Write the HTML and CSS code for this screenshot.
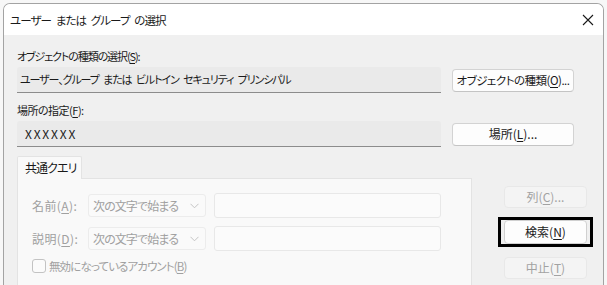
FILE: index.html
```html
<!DOCTYPE html>
<html lang="ja">
<head>
<meta charset="utf-8">
<link rel="stylesheet" href="styles.css">
</head>
<body>
<div class="window">
  <div class="titlebar">
    <span class="title">ユーザー または グループ の選択</span>
    <span class="close">
      <svg width="12" height="12" viewBox="0 0 12 12"><path d="M1 1L11 11M11 1L1 11" stroke="#1a1a1a" stroke-width="1.1" fill="none"/></svg>
    </span>
  </div>
  <div class="content">
    <div class="label l1">オブジェクトの種類の選択(<u>S</u>):</div>
    <div class="row">
      <div class="field">ユーザー、グループ または ビルトイン セキュリティ プリンシパル</div>
      <button class="btn wide">オブジェクトの種類(<u>O</u>)...</button>
    </div>
    <div class="label l2">場所の指定(<u>F</u>):</div>
    <div class="row">
      <div class="field loc">XXXXXX</div>
      <button class="btn">場所(<u>L</u>)...</button>
    </div>
    <div class="lower">
      <div class="tabs">
        <div class="tab">共通クエリ</div>
        <div class="panel">
          <div class="qrow">
            <span class="qlabel">名前(<u>A</u>):</span>
            <span class="combo">次の文字で始まる<svg class="chev" width="9" height="6" viewBox="0 0 9 6"><path d="M0.5 0.8L4.5 4.8L8.5 0.8" stroke="#c4c4c4" fill="none"/></svg></span>
            <span class="tbox"></span>
          </div>
          <div class="qrow">
            <span class="qlabel">説明(<u>D</u>):</span>
            <span class="combo">次の文字で始まる<svg class="chev" width="9" height="6" viewBox="0 0 9 6"><path d="M0.5 0.8L4.5 4.8L8.5 0.8" stroke="#c4c4c4" fill="none"/></svg></span>
            <span class="tbox"></span>
          </div>
          <div class="crow">
            <span class="check"></span>
            <span class="ctext">無効になっているアカウント(<u>B</u>)</span>
          </div>
        </div>
      </div>
      <div class="side">
        <button class="btn small disabled">列(<u>C</u>)...</button>
        <div class="focus"><button class="btn small">検索(<u>N</u>)</button></div>
        <button class="btn small disabled">中止(<u>T</u>)</button>
      </div>
    </div>
  </div>
</div>
</body>
</html>
```

FILE: styles.css
```css
* { box-sizing: border-box; }
html, body { margin: 0; padding: 0; height: 100%; }
body {
  background: #f7f7f7;
  font-family: "Noto Sans CJK JP", sans-serif;
  font-feature-settings: "palt";
  font-size: 12px;
  color: #1a1a1a;
  overflow: hidden;
  white-space: nowrap;
}
u { text-decoration: underline; text-underline-offset: 2px; }
.window {
  margin: 3px 3px 0 3px;
  height: 282px;
  border: 1px solid #a3a3a3;
  border-bottom: none;
  border-radius: 7px 7px 0 0;
  overflow: hidden;
  display: flex;
  flex-direction: column;
}
.titlebar {
  height: 31px;
  background: #ffffff;
  display: flex;
  align-items: center;
  justify-content: space-between;
  padding: 0 9px 0 6px;
  flex: none;
}
.title { font-size: 11.5px; letter-spacing: -0.9px; word-spacing: 3px; }
.close { display: flex; align-items: center; }
.content {
  flex: 1;
  background: #f0f0f0;
  padding: 13px 0 0 13px;
}
.label { line-height: 16px; }
.l1 { font-size: 11px; letter-spacing: -1.1px; }
.l2 { margin-top: 9px; font-size: 11px; letter-spacing: -0.5px; }
.row {
  display: flex;
  align-items: center;
  margin-top: 3px;
}
.field {
  width: 424px;
  height: 26px;
  background: #eaeaea;
  border-bottom: 1px solid #8c8c8c;
  border-radius: 3px 3px 0 0;
  padding: 0 3px;
  line-height: 25px;
  font-size: 11px;
  letter-spacing: -1.1px;
  word-spacing: 3px;
}
.field.loc { padding-left: 8px; letter-spacing: 1.8px; font-size: 12px; }
.btn {
  font: inherit;
  font-feature-settings: "palt";
  color: #1a1a1a;
  background: #fdfdfd;
  border: 1px solid #d3d3d3;
  border-bottom-color: #c4c4c4;
  border-radius: 4px;
  height: 23px;
  width: 122px;
  margin-left: 11px;
  padding: 0;
  line-height: 20px;
  white-space: nowrap;
}
.btn.wide { font-size: 11.5px; letter-spacing: -0.5px; }
.lower {
  display: flex;
  margin-top: 9px;
}
.tabs { width: 455px; display: flex; flex-direction: column; }
.tab {
  width: 65px;
  height: 23px;
  background: #f9f9f9;
  border: 1px solid #e3e3e3;
  border-bottom: none;
  border-radius: 2px 2px 0 0;
  padding-left: 7px;
  line-height: 22px;
  letter-spacing: -0.9px;
  position: relative;
  z-index: 1;
  margin-bottom: -1px;
}
.panel {
  background: #f9f9f9;
  border: 1px solid #e3e3e3;
  border-bottom: none;
  height: 120px;
  padding: 14px 0 0 14px;
  color: #a0a0a0;
}
.qrow {
  display: flex;
  align-items: center;
  height: 25px;
  margin-bottom: 8px;
}
.qlabel { width: 56px; letter-spacing: 0.4px; }
.combo {
  width: 118px;
  height: 23px;
  border: 1px solid #ececec;
  border-radius: 3px;
  background: #fafafa;
  display: flex;
  align-items: center;
  justify-content: space-between;
  padding: 0 6px 0 4px;
  font-size: 12px;
  letter-spacing: -0.9px;
}
.tbox {
  width: 227px;
  height: 25px;
  margin-left: 8px;
  border: 1px solid #e8e8e8;
  border-radius: 3px;
  background: #fbfbfb;
}
.crow {
  display: flex;
  align-items: center;
  gap: 3px;
  margin-top: -1px;
}
.ctext { font-size: 11.5px; letter-spacing: -0.9px; }
.check {
  width: 14px;
  height: 14px;
  border: 1px solid #c3c3c3;
  border-radius: 3px;
  background: #fbfbfb;
}
.side {
  display: flex;
  flex-direction: column;
  align-items: flex-start;
  padding: 30px 0 0 32px;
}
.btn.small {
  width: 83px;
  height: 22px;
  margin-left: 0;
}
.btn.disabled { color: #a2a2a2; background: #f4f4f4; border-color: #e8e8e8; }
.focus {
  margin: 9px 0 10px -6px;
  border: 3px solid #000;
  width: 95px;
  height: 30px;
  display: flex;
  align-items: center;
  justify-content: center;
}
.focus .btn.small { height: 24px; border-color: #d0d0d0; }
```
